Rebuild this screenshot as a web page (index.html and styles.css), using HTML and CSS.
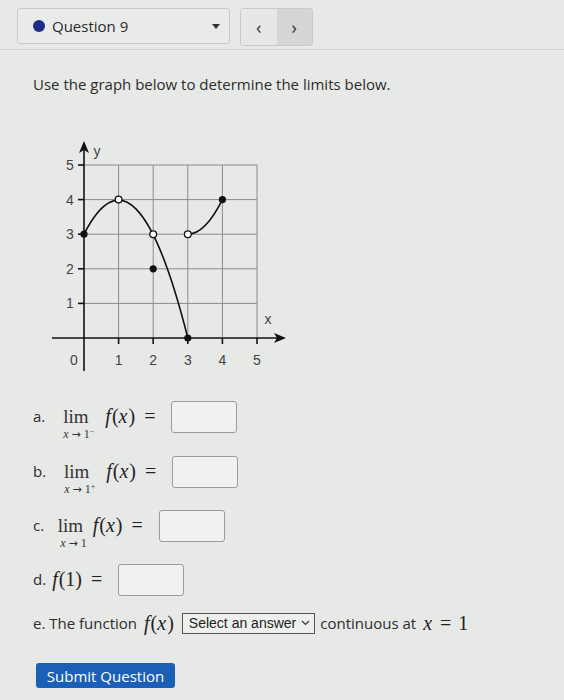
FILE: index.html
```html
<!DOCTYPE html>
<html>
<head>
<meta charset="utf-8">
<link rel="stylesheet" href="styles.css">
</head>
<body>
<div class="topbar">
  <div class="qsel">
    <span class="dot"></span>
    <span class="qname">Question 9</span>
    <span class="caret"></span>
  </div>
  <div class="nav">
    <span class="navbtn">&#8249;</span>
    <span class="navbtn dark">&#8250;</span>
  </div>
</div>
<div class="content">
  <p class="intro">Use the graph below to determine the limits below.</p>
  <svg class="graph" width="240" height="250" viewBox="0 0 240 250">
    <g stroke="#8a8a8a" stroke-width="1" fill="none">
      <line x1="68.6" y1="34" x2="68.6" y2="207"/>
      <line x1="103.2" y1="34" x2="103.2" y2="207"/>
      <line x1="137.8" y1="34" x2="137.8" y2="207"/>
      <line x1="172.4" y1="34" x2="172.4" y2="207"/>
      <line x1="207" y1="34" x2="207" y2="207"/>
      <line x1="34" y1="34" x2="207" y2="34"/>
      <line x1="34" y1="68.6" x2="207" y2="68.6"/>
      <line x1="34" y1="103.2" x2="207" y2="103.2"/>
      <line x1="34" y1="137.8" x2="207" y2="137.8"/>
      <line x1="34" y1="172.4" x2="207" y2="172.4"/>
    </g>
    <g stroke="#111" stroke-width="1.6" fill="none">
      <line x1="34" y1="18" x2="34" y2="240"/>
      <line x1="2" y1="207" x2="228" y2="207"/>
      <line x1="28" y1="34" x2="34" y2="34"/>
      <line x1="28" y1="68.6" x2="34" y2="68.6"/>
      <line x1="28" y1="103.2" x2="34" y2="103.2"/>
      <line x1="28" y1="137.8" x2="34" y2="137.8"/>
      <line x1="28" y1="172.4" x2="34" y2="172.4"/>
      <line x1="68.6" y1="207" x2="68.6" y2="213"/>
      <line x1="103.2" y1="207" x2="103.2" y2="213"/>
      <line x1="137.8" y1="207" x2="137.8" y2="213"/>
      <line x1="172.4" y1="207" x2="172.4" y2="213"/>
      <line x1="207" y1="207" x2="207" y2="213"/>
    </g>
    <path d="M34 10 L29 22 L34 19 L39 22 Z" fill="#111"/>
    <path d="M236 207 L224 202 L227 207 L224 212 Z" fill="#111"/>
    <g stroke="#111" stroke-width="1.6" fill="none">
      <path d="M34 103.2 Q85.9 0.6 137.8 207"/>
      <path d="M137.8 103.2 Q155.1 103.2 172.4 68.6"/>
    </g>
    <g fill="#111">
      <circle cx="34" cy="103.2" r="3.6"/>
      <circle cx="103.2" cy="137.8" r="3.6"/>
      <circle cx="137.8" cy="207" r="3.6"/>
      <circle cx="172.4" cy="68.6" r="3.6"/>
    </g>
    <g fill="#fff" stroke="#111" stroke-width="1.3">
      <circle cx="68.6" cy="68.6" r="3.4"/>
      <circle cx="103.2" cy="103.2" r="3.4"/>
      <circle cx="137.8" cy="103.2" r="3.4"/>
    </g>
    <g class="tick" font-family="Liberation Sans, Arial, sans-serif" font-size="14" fill="#444">
      <text x="20" y="39" text-anchor="middle">5</text>
      <text x="20" y="73.6" text-anchor="middle">4</text>
      <text x="20" y="108.2" text-anchor="middle">3</text>
      <text x="20" y="142.8" text-anchor="middle">2</text>
      <text x="20" y="177.4" text-anchor="middle">1</text>
      <text x="24" y="234" text-anchor="middle">0</text>
      <text x="68.6" y="234" text-anchor="middle">1</text>
      <text x="103.2" y="234" text-anchor="middle">2</text>
      <text x="137.8" y="234" text-anchor="middle">3</text>
      <text x="172.4" y="234" text-anchor="middle">4</text>
      <text x="207" y="234" text-anchor="middle">5</text>
      <text x="47" y="25" text-anchor="middle">y</text>
      <text x="218" y="193" text-anchor="middle">x</text>
    </g>
  </svg>

  <div class="row row-a">
    <span class="lbl">a.</span>
    <span class="lim"><span class="limw">lim</span><span class="sub"><i>x</i><span class="arr">&#8594;</span>1<sup>&#8722;</sup></span></span>
    <span class="fx wide"><i>f</i>(<i>x</i>)<span class="eq">=</span></span>
    <span class="box"></span>
  </div>
  <div class="row row-b">
    <span class="lbl">b.</span>
    <span class="lim"><span class="limw">lim</span><span class="sub"><i>x</i><span class="arr">&#8594;</span>1<sup>+</sup></span></span>
    <span class="fx wide"><i>f</i>(<i>x</i>)<span class="eq">=</span></span>
    <span class="box"></span>
  </div>
  <div class="row row-c">
    <span class="lbl">c.</span>
    <span class="lim"><span class="limw">lim</span><span class="sub"><i>x</i><span class="arr">&#8594;</span>1</span></span>
    <span class="fx"><i>f</i>(<i>x</i>)<span class="eq">=</span></span>
    <span class="box"></span>
  </div>
  <div class="row row-d">
    <span class="lbl">d.</span>
    <span class="fx"><i>f</i>(1)<span class="eq">=</span></span>
    <span class="box"></span>
  </div>
  <div class="row row-e">
    <span class="lbl">e. The function</span>
    <span class="fx"><i>f</i>(<i>x</i>)</span>
    <span class="select">Select an answer<svg class="chev" width="9" height="6" viewBox="0 0 9 6"><path d="M1 1 L4.5 4.5 L8 1" fill="none" stroke="#333" stroke-width="1.2"/></svg></span>
    <span class="lbl">continuous at</span>
    <span class="fx"><i>x</i><span class="eq">=</span>1</span>
  </div>
  <button class="submit">Submit Question</button>
</div>
</body>
</html>
```
FILE: styles.css
```css
html, body {
  margin: 0;
  padding: 0;
}
body {
  background: #e7e9e7;
  width: 564px;
  height: 700px;
  overflow: hidden;
  font-family: "Open Sans", "Liberation Sans", sans-serif;
  color: #333;
}
.topbar {
  display: flex;
  gap: 10px;
  padding: 8px 0 3px 17px;
  border-bottom: 1px solid #cfd1cf;
}
.qsel {
  width: 211px;
  height: 34px;
  border: 1px solid #c9cbc9;
  border-radius: 3px;
  background: #e9ebe9;
  display: flex;
  align-items: center;
}
.dot {
  width: 12px;
  height: 12px;
  border-radius: 50%;
  background: #1f2a8a;
  margin-left: 15px;
}
.qname {
  margin-left: 7px;
  font-size: 15px;
  color: #2a2a2a;
  flex: 1;
}
.caret {
  width: 0;
  height: 0;
  border-left: 4px solid transparent;
  border-right: 4px solid transparent;
  border-top: 5px solid #333;
  margin-right: 9px;
}
.nav {
  display: flex;
  width: 71px;
  height: 36px;
  border: 1px solid #c9cbc9;
  border-radius: 3px;
  overflow: hidden;
}
.navbtn {
  flex: 1;
  display: flex;
  align-items: center;
  justify-content: center;
  font-size: 18px;
  color: #333;
  background: #e6e8e6;
}
.navbtn.dark {
  background: #d4d6d4;
}
.content {
  padding-left: 33px;
}
.intro {
  margin: 24px 0 0 0;
  font-size: 15px;
  line-height: 20px;
  color: #2c2c2c;
}
.graph {
  display: block;
  margin: 37px 0 0 17px;
}
.row {
  display: flex;
  align-items: flex-start;
}
.lbl {
  font-size: 15px;
  line-height: 26px;
  color: #2c2c2c;
}
.lim {
  display: inline-flex;
  flex-direction: column;
  align-items: center;
  margin-left: 12px;
  font-family: "Liberation Serif", "Times New Roman", serif;
}
.limw {
  font-size: 19px;
  line-height: 23px;
  padding-top: 2px;
}
.sub {
  font-size: 12px;
  line-height: 12px;
  height: 12px;
  margin-top: 0;
  margin-left: 6px;
  white-space: nowrap;
}
.arr {
  font-family: "DejaVu Sans", sans-serif;
  font-size: 11px;
  line-height: 12px;
  margin: 0 3px;
}
.sub sup {
  font-size: 8px;
  line-height: 8px;
  vertical-align: 4px;
}
.fx {
  font-family: "Liberation Serif", "Times New Roman", serif;
  font-size: 20px;
  line-height: 26px;
  margin-left: 6px;
  color: #222;
}
.fx i {
  padding-right: 1px;
}
.eq {
  margin: 0 8px 0 9px;
}
.fx.wide {
  margin-left: 11px;
}
.row-c .lim {
  margin-left: 10px;
}
.box {
  width: 64px;
  height: 30px;
  border: 1px solid #9a9c9a;
  border-radius: 3px;
  background: #f0f2f0;
  margin-left: 8px;
  margin-top: -2px;
}
.row-a { margin-top: 22px; }
.row-b { margin-top: 18px; }
.row-c { margin-top: 17px; }
.row-d { margin-top: 17px; }
.row-e { margin-top: 14px; align-items: center; }
.row-e .fx { margin-left: 7px; }
.row-e .fx .eq { margin: 0 7px; }
.select {
  display: inline-flex;
  align-items: center;
  gap: 5px;
  margin: 0 5px 0 8px;
  height: 19px;
  padding: 0 4px 0 6px;
  border: 1px solid #555;
  background: #eef0ee;
  font-family: "Liberation Sans", Arial, sans-serif;
  font-size: 14px;
  color: #222;
}
.submit {
  display: block;
  margin: 27px 0 0 3px;
  width: 139px;
  height: 25px;
  border: none;
  border-radius: 3px;
  background: #1c5fb6;
  color: #fff;
  font-family: "Open Sans", "Liberation Sans", sans-serif;
  font-size: 15px;
  padding: 0;
}
```
